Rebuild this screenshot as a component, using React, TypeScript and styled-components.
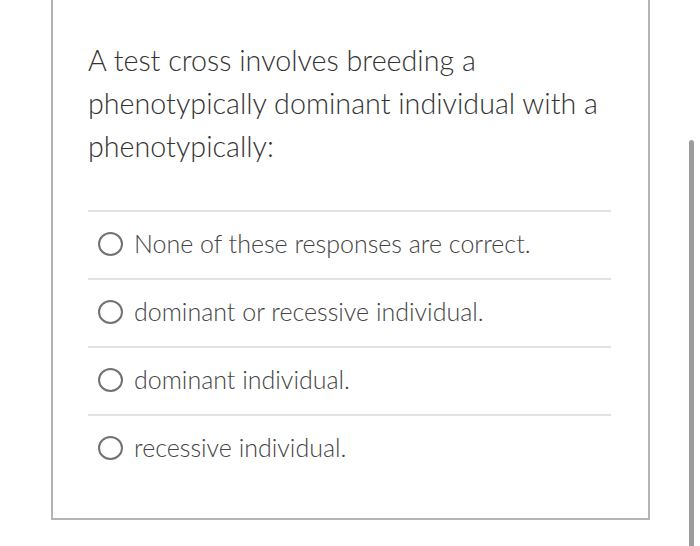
import React from "react";
import styled, { createGlobalStyle } from "styled-components";

const options = [
  "None of these responses are correct.",
  "dominant or recessive individual.",
  "dominant individual.",
  "recessive individual.",
];

const App = () => {
  return (
    <Page>
      <GlobalStyle />
      <Card>
        <Question>
          A test cross involves breeding a phenotypically dominant individual with a
          phenotypically:
        </Question>
        <Options>
          {options.map((text) => (
            <Option key={text}>
              <Radio />
              <OptionText>{text}</OptionText>
            </Option>
          ))}
        </Options>
      </Card>
      <ScrollThumb />
    </Page>
  );
};

export default App;

const GlobalStyle = createGlobalStyle`
  html, body {
    margin: 0;
    padding: 0;
    background: #ffffff;
    overflow: hidden;
  }
  body {
    font-family: Lato, "Open Sans", sans-serif;
  }
`;

const Page = styled.div`
  position: relative;
  width: 700px;
  height: 546px;
  overflow: hidden;
  background: #fff;
`;

const Card = styled.div`
  box-sizing: border-box;
  width: 599px;
  margin: -20px 0 0 51px;
  padding: 57px 37px 36px 35px;
  border: 2px solid #b4b4b4;
  background: #fff;
`;

const Question = styled.p`
  margin: 0 0 42px;
  font-size: 28.7px;
  font-weight: 300;
  line-height: 43px;
  color: #333333;
  padding-right: 4px;
`;

const Options = styled.div`
  display: flex;
  flex-direction: column;
`;

const Option = styled.label`
  box-sizing: border-box;
  display: flex;
  align-items: center;
  gap: 11px;
  height: 68px;
  padding: 0 0 4px 10px;
  border-top: 2px solid #e2e2e2;
`;

const Radio = styled.span`
  box-sizing: border-box;
  flex: none;
  width: 25px;
  height: 24px;
  border-radius: 50%;
  border: 2.5px solid #727272;
  margin-top: 1px;
`;

const OptionText = styled.span`
  font-size: 25px;
  font-weight: 300;
  color: #444444;
`;

const ScrollThumb = styled.div`
  position: absolute;
  left: 689px;
  top: 140px;
  width: 5px;
  height: 420px;
  border-radius: 3px;
  background: #9c9c9c;
`;
